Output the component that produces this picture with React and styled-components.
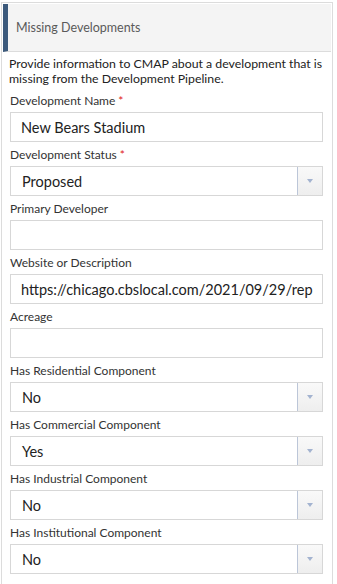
import React from 'react'
import styled, { createGlobalStyle } from 'styled-components'

const GlobalStyle = createGlobalStyle`
  body {
    margin: 0;
    background: #fff;
    font-family: Lato, "Open Sans", sans-serif;
  }
`

const Panel = styled.div`
  box-sizing: border-box;
  width: 332px;
  margin: 2px 0 0 1px;
  border: 1px solid #dcdcdc;
  border-bottom: none;
  height: 582px;
  overflow: hidden;
`

const Header = styled.div`
  margin: 1px 1px 0;
  height: 47px;
  display: flex;
  align-items: center;
  padding-left: 8px;
  background: #f4f4f4;
  border-left: 5px solid #3c5a7c;
  border-bottom: 1px solid #dcdcdc;
  color: #5a5a5a;
  font-size: 12.5px;
`

const Body = styled.div`
  padding: 4px 10px 0 7px;
`

const Intro = styled.p`
  margin: 0 -8px 2px 0;
  font-size: 12.3px;
  line-height: 15px;
  color: #222;
`

const Field = styled.div`
  display: flex;
  flex-direction: column;
`

const Label = styled.label`
  display: block;
  padding: 5px 0 3px 1px;
  font-size: 12px;
  line-height: 16px;
  color: #333;
`

const Required = styled.span`
  color: #e02020;
  margin-left: 3px;
`

const Box = styled.div`
  box-sizing: border-box;
  display: flex;
  align-items: stretch;
  height: 30px;
  margin-left: 1px;
  width: 313px;
  border: 1px solid #d7d7d7;
  background: #fff;
`

const Value = styled.div`
  flex: 1;
  display: flex;
  align-items: center;
  padding-left: ${p => (p.$select ? '11px' : '10px')};
  font-size: 14.5px;
  color: #222;
  white-space: nowrap;
  overflow: hidden;
`

const Toggle = styled.div`
  width: 24px;
  display: flex;
  align-items: center;
  justify-content: center;
  border-left: 1px solid #bcc6d8;
  background: linear-gradient(#f9f9f9, #eeeeee);
`

const Arrow = styled.span`
  width: 0;
  height: 0;
  border-left: 3.5px solid transparent;
  border-right: 3.5px solid transparent;
  border-top: 4px solid #a3b3d0;
`

const fields = [
  { label: 'Development Name', required: true, value: 'New Bears Stadium' },
  { label: 'Development Status', required: true, value: 'Proposed', select: true },
  { label: 'Primary Developer', value: '' },
  { label: 'Website or Description', value: 'https://chicago.cbslocal.com/2021/09/29/rep' },
  { label: 'Acreage', value: '' },
  { label: 'Has Residential Component', value: 'No', select: true },
  { label: 'Has Commercial Component', value: 'Yes', select: true },
  { label: 'Has Industrial Component', value: 'No', select: true },
  { label: 'Has Institutional Component', value: 'No', select: true },
]

export default function App() {
  return (
    <>
      <GlobalStyle />
      <Panel>
        <Header>Missing Developments</Header>
        <Body>
          <Intro>
            Provide information to CMAP about a development that is missing from the Development Pipeline.
          </Intro>
          {fields.map(f => (
            <Field key={f.label}>
              <Label>
                {f.label}
                {f.required && <Required>*</Required>}
              </Label>
              <Box>
                <Value $select={f.select}>{f.value}</Value>
                {f.select && (
                  <Toggle>
                    <Arrow />
                  </Toggle>
                )}
              </Box>
            </Field>
          ))}
        </Body>
      </Panel>
    </>
  )
}
